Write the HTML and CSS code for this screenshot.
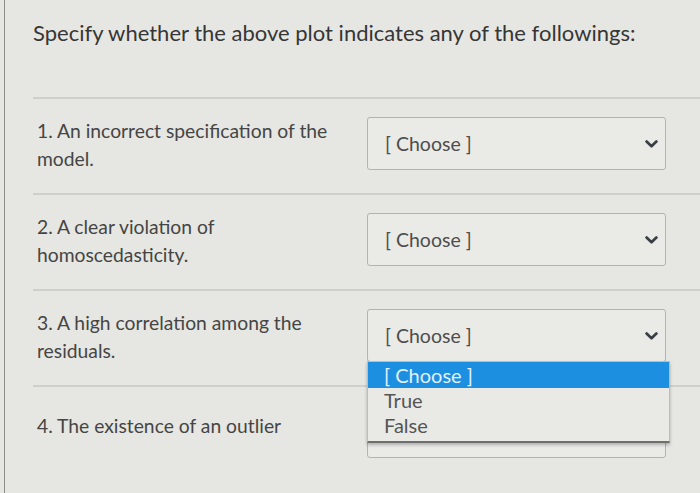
FILE: index.html
```html
<!DOCTYPE html>
<html>
<head>
<meta charset="utf-8">
<link rel="stylesheet" href="styles.css">
</head>
<body>
<div class="page">
  <h1 class="title">Specify whether the above plot indicates any of the followings:</h1>
  <div class="rows">
    <div class="row">
      <div class="label">1. An incorrect specification of the model.</div>
      <div class="select">
        <span class="value">[ Choose ]</span>
        <svg class="chev" width="13" height="8" viewBox="0 0 13 8"><polyline points="1.6,1.6 6.5,6.2 11.4,1.6" fill="none" stroke="#3b3e46" stroke-width="2.8" stroke-linecap="round" stroke-linejoin="round"/></svg>
      </div>
    </div>
    <div class="row">
      <div class="label">2. A clear violation of homoscedasticity.</div>
      <div class="select">
        <span class="value">[ Choose ]</span>
        <svg class="chev" width="13" height="8" viewBox="0 0 13 8"><polyline points="1.6,1.6 6.5,6.2 11.4,1.6" fill="none" stroke="#3b3e46" stroke-width="2.8" stroke-linecap="round" stroke-linejoin="round"/></svg>
      </div>
    </div>
    <div class="row">
      <div class="label">3. A high correlation among the residuals.</div>
      <div class="select open">
        <span class="value">[ Choose ]</span>
        <svg class="chev" width="13" height="8" viewBox="0 0 13 8"><polyline points="1.6,1.6 6.5,6.2 11.4,1.6" fill="none" stroke="#3b3e46" stroke-width="2.8" stroke-linecap="round" stroke-linejoin="round"/></svg>
        <ul class="menu">
          <li class="opt active">[ Choose ]</li>
          <li class="opt">True</li>
          <li class="opt">False</li>
        </ul>
      </div>
    </div>
    <div class="row last">
      <div class="label single">4. The existence of an outlier</div>
      <div class="select covered">
        <span class="value">[ Choose ]</span>
      </div>
    </div>
  </div>
</div>
</body>
</html>
```
FILE: styles.css
```css
html, body {
  margin: 0;
  padding: 0;
  background: #e6e6e2;
}
body {
  font-family: Lato, "Open Sans", sans-serif;
  color: #3d3d3d;
  height: 493px;
  overflow: hidden;
}
.page {
  margin-left: 4px;
  border-left: 1px solid #8c8c8a;
  padding-left: 28px;
  height: 493px;
}
.title {
  margin: 0;
  padding-top: 19px;
  height: 97px;
  box-sizing: border-box;
  font-size: 22px;
  font-weight: 400;
  line-height: 28px;
  color: #363636;
}
.row {
  display: flex;
  align-items: flex-start;
  border-top: 2px solid #cfcfcc;
  padding: 18px 0 20px;
}
.label {
  width: 320px;
  padding-left: 4px;
  padding-top: 0;
  font-size: 19.3px;
  line-height: 28px;
  color: #454545;
}
.label.single {
  padding-top: 7px;
}
.select {
  position: relative;
  margin-left: auto;
  margin-right: 34px;
  width: 299px;
  height: 53px;
  box-sizing: border-box;
  border: 1px solid #b3b3b0;
  border-radius: 3px;
  background: #eaeae7;
  display: flex;
  align-items: center;
  padding: 0 7px 0 17px;
}
.value {
  flex: 1;
  font-size: 19.5px;
  color: #4e4e4e;
}
.covered .value {
  visibility: hidden;
}
.menu {
  position: absolute;
  top: 51px;
  left: -1px;
  width: 301px;
  margin: 0;
  padding: 0 0 3px;
  list-style: none;
  background: #e9e9e6;
  border: 1px solid #bdbdba;
  border-bottom: 2px solid #6f6f6f;
  box-shadow: 0 2px 3px rgba(0,0,0,0.25);
  z-index: 5;
}
.opt {
  font-size: 20px;
  line-height: 25px;
  padding-left: 16px;
  color: #555555;
}
.opt.active {
  background: #1d8fe0;
  color: #e3f1ff;
  line-height: 26px;
}
```
